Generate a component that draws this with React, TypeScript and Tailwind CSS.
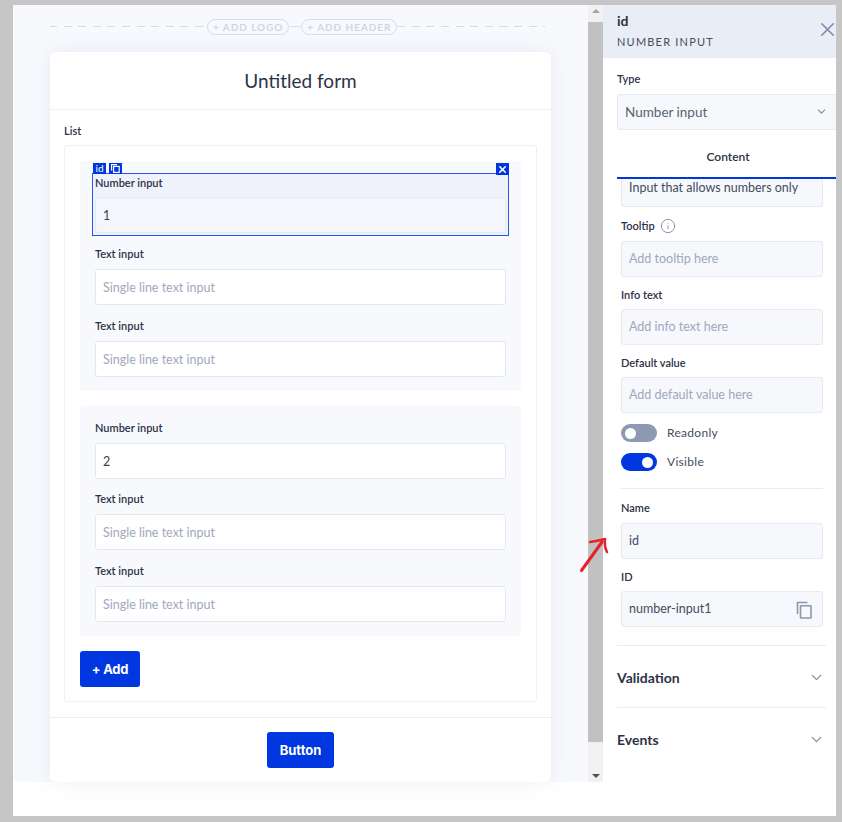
import React from "react";
import { ChevronDown, X, Info } from "lucide-react";

const lato = "font-['Lato',sans-serif]";

function Label({ children, className = "" }: { children: React.ReactNode; className?: string }) {
  return <div className={`${lato} text-[11px] leading-[14px] font-semibold text-[#2c3345] ${className}`}>{children}</div>;
}

function FormField({ label, value, placeholder, mt, mb }: { label: string; value?: string; placeholder?: string; mt: string; mb: string }) {
  return (
    <div className={`${mt}`}>
      <Label className={`pl-[15px] ${mb}`}>{label}</Label>
      <div className={`ml-[15px] mr-[15px] h-[36px] rounded-[3px] border border-[#e3e7f2] bg-white px-[7px] pt-[2px] flex items-center ${lato} text-[12.5px] ${value ? "text-[#3a4252]" : "text-[#a0a8bd]"}`}>
        {value ?? placeholder}
      </div>
    </div>
  );
}

function CopyGlyph() {
  return (
    <svg width="18" height="18" viewBox="0 0 18 18" fill="none" stroke="#8a97b1" strokeWidth="1.6" className="mr-[1px] mt-[1px]">
      <path d="M12.5 1.5 H2.5 V13" />
      <rect x="5.5" y="4.8" width="10.5" height="12.2" rx="0.5" />
    </svg>
  );
}

function PanelField({ label, placeholder, value, info, mt, mb = "mb-[8px]", icon }: { label: string; placeholder?: string; value?: string; info?: boolean; mt: string; mb?: string; icon?: boolean }) {
  return (
    <div className={mt}>
      <div className={`flex items-center gap-[5px] h-[14px] ${mb} ${lato} text-[11px] font-semibold text-[#2c3345]`}>
        {label}
        {info && <Info size={16} strokeWidth={1.4} className="text-[#7f8ba8]" />}
      </div>
      <div className={`h-[36px] rounded-[3px] border border-[#e6eaf4] bg-[#f6f8fc] pl-[7px] pr-[8px] flex items-center justify-between ${lato} text-[12.5px] ${value ? "text-[#444c5c]" : "text-[#a0a8bd]"}`}>
        <span>{value ?? placeholder}</span>
        {icon && <CopyGlyph />}
      </div>
    </div>
  );
}

function Toggle({ on, label, mt }: { on: boolean; label: string; mt: string }) {
  return (
    <div className={`flex items-center gap-[10px] ${mt}`}>
      <div className={`w-[36px] h-[18px] rounded-full flex items-center px-[4px] ${on ? "bg-[#0037e0] justify-end" : "bg-[#8e9ab4] justify-start"}`}>
        <div className="w-[11px] h-[11px] rounded-full bg-white" />
      </div>
      <span className={`${lato} text-[12px] text-[#444c5c] tracking-[0.3px]`}>{label}</span>
    </div>
  );
}

function Pill({ children }: { children: React.ReactNode }) {
  return (
    <div className={`h-[16px] rounded-full border border-[#d6dded] px-[5px] pt-[1px] flex items-center ${lato} text-[10px] font-bold tracking-[0.95px] text-[#ced6e6] whitespace-nowrap`}>
      {children}
    </div>
  );
}

const dashClass = "h-0 border-t border-dashed border-[#d3daea] [border-image:repeating-linear-gradient(90deg,#d3daea_0_8px,transparent_8px_14.4px)_1]";

export default function App() {
  return (
    <div className="relative w-[842px] h-[822px] overflow-hidden bg-[#c6c6c6] pt-[5px] pl-[13px] pr-[6px] pb-[6px]">
      <div className="flex h-full bg-white">
        <div className="w-[590px] shrink-0 flex flex-col">
          <div className="flex h-[777px]">
            {/* canvas */}
            <div className="w-[575px] bg-[#f8f9fd] pl-[37px] pr-[37px] flex flex-col">
              <div className="h-[47px] flex items-center gap-[1px] pr-[6px] pb-[4px]">
                <div className={`w-[156px] shrink-0 ${dashClass}`} />
                <Pill>+ ADD LOGO</Pill>
                <div className="w-[10px] border-t border-[#d6dded]" />
                <Pill>+ ADD HEADER</Pill>
                <div className={`flex-1 ${dashClass}`} />
              </div>
              <div className="flex-1 w-[501px] bg-white rounded-[6px] shadow-[0_0_20px_rgba(120,135,180,0.12)] flex flex-col">
                <div className={`h-[58px] shrink-0 border-b border-[#eef0f7] pt-[1px] flex items-center justify-center ${lato} text-[19px] text-[#2c3345]`}>
                  Untitled form
                </div>
                <div className="px-[14px] pt-[14px]">
                  <Label className="mb-[7px]">List</Label>
                  <div className="h-[557px] rounded-[3px] border border-[#eef0f7] pl-[15px] pr-[15px] pt-[15px]">
                    {/* group 1 */}
                    <div className="relative h-[230px] rounded-[3px] bg-[#f8f9fd] pt-[12px]">
                      <div className="relative z-0 mx-[12px] h-[63px] border border-[#2a56f0] bg-[#eff2fb]">
                        <div className={`absolute -top-[11px] left-0 h-[11px] w-[13px] bg-[#0037e0] ${lato} text-[10px] leading-[11px] text-white text-center`}>id</div>
                        <div className="absolute -top-[11px] left-[16px] h-[11px] w-[13px] bg-[#0037e0] flex items-center justify-center">
                          <svg width="9" height="9" viewBox="0 0 9 9" fill="none" stroke="white" strokeWidth="1.2"><path d="M6 0.6 H0.6 V6.5" /><rect x="2.6" y="2.4" width="5.6" height="6" /></svg>
                        </div>
                        <div className="absolute -top-[11px] -right-px h-[12px] w-[13px] bg-[#0037e0] flex items-center justify-center">
                          <X size={11} strokeWidth={3.5} className="text-white" />
                        </div>
                        <Label className="pl-[2px] pt-[2px] mb-[7px]">Number input</Label>
                        <div className={`mx-[2px] h-[36px] rounded-[3px] border border-[#e6eaf6] bg-[#f3f6fd] pl-[7px] pt-[2px] flex items-center ${lato} text-[12.5px] text-[#3a4252]`}>1</div>
                      </div>
                      <FormField label="Text input" placeholder="Single line text input" mt="mt-[11px]" mb="mb-[8px]" />
                      <FormField label="Text input" placeholder="Single line text input" mt="mt-[14px]" mb="mb-[8px]" />
                    </div>
                    {/* group 2 */}
                    <div className="h-[230px] mt-[15px] rounded-[3px] bg-[#f8f9fd] pt-[15px]">
                      <FormField label="Number input" value="2" mt="mt-0" mb="mb-[8px]" />
                      <FormField label="Text input" placeholder="Single line text input" mt="mt-[13px]" mb="mb-[8px]" />
                      <FormField label="Text input" placeholder="Single line text input" mt="mt-[14px]" mb="mb-[8px]" />
                    </div>
                    <div className="mt-[15px] w-[60px] h-[36px] pt-[1px] rounded-[3px] bg-[#0037e0] flex items-center justify-center font-['Inter',sans-serif] text-[13px] font-bold tracking-[-0.2px] text-white">
                      + Add
                    </div>
                  </div>
                </div>
                <div className="mt-[15px] flex-1 border-t border-[#e9edf6] flex justify-center pt-[14px]">
                  <div className="w-[67px] h-[36px] pt-[1px] rounded-[3px] bg-[#0037e0] flex items-center justify-center font-['Inter',sans-serif] text-[13px] font-bold text-white">
                    Button
                  </div>
                </div>
              </div>
            </div>
            {/* scrollbar */}
            <div className="w-[15px] bg-[#f1f1f1] flex flex-col items-center">
              <div className="h-[12px] flex items-center justify-center">
                <div className="w-0 h-0 border-l-[4px] border-r-[4px] border-b-[4px] border-l-transparent border-r-transparent border-b-[#a3a3a3]" />
              </div>
              <div className="w-full h-[720px] mt-[5px] bg-[#c1c1c1]" />
              <div className="flex-1 flex items-end pb-[4px]">
                <div className="w-0 h-0 border-l-[4px] border-r-[4px] border-t-[4px] border-l-transparent border-r-transparent border-t-[#505050]" />
              </div>
            </div>
          </div>
        </div>
        {/* right panel */}
        <div className="w-[233px] shrink-0 flex flex-col overflow-hidden">
          <div className="relative h-[53px] bg-[#e9eef6] pl-[14px]">
            <div className={`${lato} text-[14px] font-bold leading-[18px] pt-[7px] text-[#2c3345]`}>id</div>
            <div className={`${lato} text-[11px] leading-[14px] mt-[5px] tracking-[1.2px] text-[#444c5c]`}>NUMBER INPUT</div>
            <X size={23} strokeWidth={1.7} className="absolute right-[-3px] top-[13px] text-[#7f8ba8]" />
          </div>
          <div className="pl-[14px] pt-[14px]">
            <Label className="mb-[8px]">Type</Label>
            <div className={`h-[36px] rounded-l-[3px] border border-r-0 border-[#e6eaf4] bg-[#f6f8fc] pl-[7px] pr-[8px] flex items-center justify-between ${lato} text-[13.5px] text-[#5a6272]`}>
              Number input
              <ChevronDown size={13} className="text-[#7f8ba8] -translate-y-px" />
            </div>
            <div className={`h-[49px] pt-[7px] pl-[3px] flex items-center justify-center border-b-2 border-[#0037e0] ${lato} text-[12px] font-semibold text-[#2c3345]`}>Content</div>
          </div>
          <div className="pl-[18px] pr-[13px]">
            <div className={`h-[28px] rounded-b-[3px] border border-t-0 border-[#e6eaf4] bg-[#f6f8fc] pl-[7px] ${lato} text-[12.5px] leading-[18px] text-[#444c5c]`}>Input that allows numbers only</div>
            <PanelField label="Tooltip" info placeholder="Add tooltip here" mt="mt-[12px]" />
            <PanelField label="Info text" placeholder="Add info text here" mt="mt-[11px]" mb="mb-[7px]" />
            <PanelField label="Default value" placeholder="Add default value here" mt="mt-[11px]" mb="mb-[7px]" />
            <Toggle on={false} label="Readonly" mt="mt-[11px]" />
            <Toggle on label="Visible" mt="mt-[11px]" />
            <div className="mt-[17px] border-t border-[#e6eaf4]" />
            <PanelField label="Name" value="id" mt="mt-[12px]" />
            <PanelField label="ID" value="number-input1" icon mt="mt-[11px]" mb="mb-[7px]" />
          </div>
          <div className="pl-[14px] pr-[10px] mt-[18px]">
            <div className={`h-[62px] border-t border-[#e6eaf4] pt-[1px] pr-[1px] flex items-center justify-between ${lato} text-[14px] font-bold text-[#2c3345]`}>
              Validation
              <ChevronDown size={17} strokeWidth={1.8} className="text-[#7f8ba8]" />
            </div>
            <div className={`h-[63px] border-t border-[#e6eaf4] pr-[1px] flex items-center justify-between ${lato} text-[14px] font-bold text-[#2c3345]`}>
              Events
              <ChevronDown size={17} strokeWidth={1.8} className="text-[#7f8ba8]" />
            </div>
          </div>
        </div>
      </div>
      {/* hand-drawn annotation arrow */}
      <svg className="absolute left-[578px] top-[536px]" width="32" height="38" viewBox="0 0 32 38" fill="none">
        <path d="M3.5 34.5 L24 6" stroke="#e8202a" strokeWidth="3" strokeLinecap="round" />
        <path d="M12 6 Q19 5 27 3 Q26 10 29 16" stroke="#e8202a" strokeWidth="2.6" strokeLinecap="round" strokeLinejoin="round" />
      </svg>
    </div>
  );
}
